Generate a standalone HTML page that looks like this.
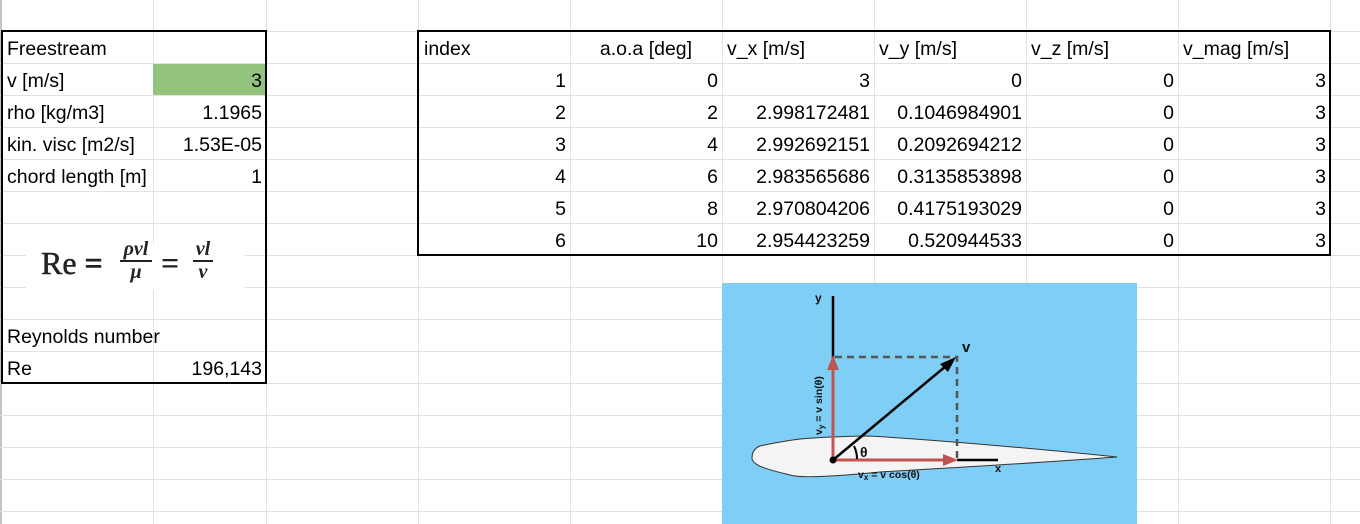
<!DOCTYPE html>
<html><head><meta charset="utf-8"><style>
body{margin:0;width:1360px;height:524px;overflow:hidden;background:#fff;position:relative;font-family:"Liberation Sans",Arial,sans-serif;font-size:19.5px;color:#000}
.h{position:absolute;left:0;width:1360px;height:1px;background:#e2e2e2}
.v{position:absolute;top:0;height:524px;width:1px;background:#e2e2e2}
.t{position:absolute;height:32px;line-height:36px;white-space:nowrap}
.r{text-align:right}
.c{text-align:center}
.b{position:absolute;border:2px solid #000;box-sizing:border-box}
</style></head><body>
<div class="v" style="left:0;width:2px;background:#c4c4c4"></div>
<div class="v" style="left:153px"></div><div class="v" style="left:266px"></div><div class="v" style="left:418px"></div><div class="v" style="left:570px"></div><div class="v" style="left:722px"></div><div class="v" style="left:874px"></div><div class="v" style="left:1026px"></div><div class="v" style="left:1178px"></div><div class="v" style="left:1330px"></div>
<div class="h" style="top:31px"></div><div class="h" style="top:63px"></div><div class="h" style="top:95px"></div><div class="h" style="top:127px"></div><div class="h" style="top:159px"></div><div class="h" style="top:191px"></div><div class="h" style="top:223px"></div><div class="h" style="top:255px"></div><div class="h" style="top:287px"></div><div class="h" style="top:319px"></div><div class="h" style="top:351px"></div><div class="h" style="top:383px"></div><div class="h" style="top:415px"></div><div class="h" style="top:447px"></div><div class="h" style="top:479px"></div><div class="h" style="top:511px"></div>

<div style="position:absolute;left:153px;top:64px;width:113px;height:31px;background:#93c47d"></div>
<div style="position:absolute;left:26px;top:244px;width:219px;height:46px;background:#fff"></div>

<div class="t" style="left:7px;top:31px">Freestream</div>
<div class="t" style="left:7px;top:63px">v [m/s]</div>
<div class="t" style="left:7px;top:95px">rho [kg/m3]</div>
<div class="t" style="left:7px;top:127px">kin. visc [m2/s]</div>
<div class="t" style="left:7px;top:159px">chord length [m]</div>
<div class="t" style="left:7px;top:319px">Reynolds number</div>
<div class="t" style="left:7px;top:351px">Re</div>
<div class="t r" style="left:153px;width:109px;top:63px">3</div>
<div class="t r" style="left:153px;width:109px;top:95px">1.1965</div>
<div class="t r" style="left:153px;width:109px;top:127px">1.53E-05</div>
<div class="t r" style="left:153px;width:109px;top:159px">1</div>
<div class="t r" style="left:153px;width:109px;top:351px">196,143</div>

<div style="position:absolute;left:41px;top:247px;font-family:'Liberation Serif',serif;font-size:32px;color:#222;line-height:32px;-webkit-text-stroke:0.5px #222">Re <span style="font-weight:bold">=</span></div>
<div style="position:absolute;left:120px;top:239px;width:32px;text-align:center;font-family:'Liberation Serif',serif;font-style:italic;font-size:20px;color:#222;line-height:20px;font-weight:bold">ρvl<div style="border-top:2px solid #222;margin:1px 0 0"></div>μ</div>
<div style="position:absolute;left:161px;top:247px;font-family:'Liberation Serif',serif;font-size:32px;color:#222;line-height:32px;font-weight:bold">=</div>
<div style="position:absolute;left:193px;top:239px;width:20px;text-align:center;font-family:'Liberation Serif',serif;font-style:italic;font-size:20px;color:#222;line-height:20px;font-weight:bold">vl<div style="border-top:2px solid #222;margin:1px 0 0"></div>ν</div>

<div class="b" style="left:1px;top:30px;width:266px;height:354px"></div>

<div class="t" style="left:424px;top:31px">index</div>
<div class="t c" style="left:570px;width:152px;top:31px">a.o.a [deg]</div>
<div class="t" style="left:727px;top:31px">v_x [m/s]</div>
<div class="t" style="left:879px;top:31px">v_y [m/s]</div>
<div class="t" style="left:1031px;top:31px">v_z [m/s]</div>
<div class="t" style="left:1183px;top:31px">v_mag [m/s]</div>

<div class="t r" style="left:418px;width:148px;top:63px">1</div><div class="t r" style="left:570px;width:148px;top:63px">0</div><div class="t r" style="left:722px;width:148px;top:63px">3</div><div class="t r" style="left:874px;width:148px;top:63px">0</div><div class="t r" style="left:1026px;width:148px;top:63px">0</div><div class="t r" style="left:1178px;width:148px;top:63px">3</div>
<div class="t r" style="left:418px;width:148px;top:95px">2</div><div class="t r" style="left:570px;width:148px;top:95px">2</div><div class="t r" style="left:722px;width:148px;top:95px">2.998172481</div><div class="t r" style="left:874px;width:148px;top:95px">0.1046984901</div><div class="t r" style="left:1026px;width:148px;top:95px">0</div><div class="t r" style="left:1178px;width:148px;top:95px">3</div>
<div class="t r" style="left:418px;width:148px;top:127px">3</div><div class="t r" style="left:570px;width:148px;top:127px">4</div><div class="t r" style="left:722px;width:148px;top:127px">2.992692151</div><div class="t r" style="left:874px;width:148px;top:127px">0.2092694212</div><div class="t r" style="left:1026px;width:148px;top:127px">0</div><div class="t r" style="left:1178px;width:148px;top:127px">3</div>
<div class="t r" style="left:418px;width:148px;top:159px">4</div><div class="t r" style="left:570px;width:148px;top:159px">6</div><div class="t r" style="left:722px;width:148px;top:159px">2.983565686</div><div class="t r" style="left:874px;width:148px;top:159px">0.3135853898</div><div class="t r" style="left:1026px;width:148px;top:159px">0</div><div class="t r" style="left:1178px;width:148px;top:159px">3</div>
<div class="t r" style="left:418px;width:148px;top:191px">5</div><div class="t r" style="left:570px;width:148px;top:191px">8</div><div class="t r" style="left:722px;width:148px;top:191px">2.970804206</div><div class="t r" style="left:874px;width:148px;top:191px">0.4175193029</div><div class="t r" style="left:1026px;width:148px;top:191px">0</div><div class="t r" style="left:1178px;width:148px;top:191px">3</div>
<div class="t r" style="left:418px;width:148px;top:223px">6</div><div class="t r" style="left:570px;width:148px;top:223px">10</div><div class="t r" style="left:722px;width:148px;top:223px">2.954423259</div><div class="t r" style="left:874px;width:148px;top:223px">0.520944533</div><div class="t r" style="left:1026px;width:148px;top:223px">0</div><div class="t r" style="left:1178px;width:148px;top:223px">3</div>

<div class="b" style="left:417px;top:30px;width:914px;height:226px"></div>

<svg style="position:absolute;left:0;top:0" width="1360" height="524">
<rect x="722" y="283" width="415" height="241" fill="#7ecef6"/>
<path d="M760,446 C790,440 800,437 870,436 C950,441 1050,450 1117,457 C1050,462 950,468 880,472 C830,477 800,478 790,475 C770,470 752,466 752,458 C752,452 755,448 760,446 Z" fill="#f4f4f4" stroke="#333" stroke-width="1"/>
<line x1="833" y1="296" x2="833" y2="358" stroke="#000" stroke-width="2.5"/>
<line x1="957" y1="460" x2="998" y2="460" stroke="#000" stroke-width="2.5"/>
<path d="M835,357 H957 V460" fill="none" stroke="#555" stroke-width="2.5" stroke-dasharray="7,5"/>
<line x1="833" y1="460" x2="833" y2="368" stroke="#c0544f" stroke-width="3"/>
<polygon points="827,370 839,370 833,355" fill="#c0544f"/>
<line x1="833" y1="460" x2="945" y2="460" stroke="#c0544f" stroke-width="3"/>
<polygon points="943,454 943,466 958,460" fill="#c0544f"/>
<line x1="833" y1="460" x2="946" y2="366" stroke="#000" stroke-width="2.5"/>
<polygon points="956,357 940,364 948,372" fill="#000"/>
<circle cx="833" cy="460" r="3.5" fill="#000"/>
<path d="M854,446 Q857,452 857,459" fill="none" stroke="#000" stroke-width="2"/>
<g font-family="Liberation Sans,sans-serif" font-weight="bold" fill="#111">
<text x="815" y="302" font-size="12">y</text>
<text x="962" y="352" font-size="15">v</text>
<text x="860" y="457" font-size="14">θ</text>
<text x="995" y="472" font-size="11">x</text>
<text x="858" y="478" font-size="10.5">v<tspan font-size="8" dy="2">x</tspan><tspan dy="-2"> = v cos(θ)</tspan></text>
<text transform="translate(822,435) rotate(-90)" font-size="10.5">v<tspan font-size="8" dy="2">y</tspan><tspan dy="-2"> = v sin(θ)</tspan></text>
</g>
</svg>
</body></html>
